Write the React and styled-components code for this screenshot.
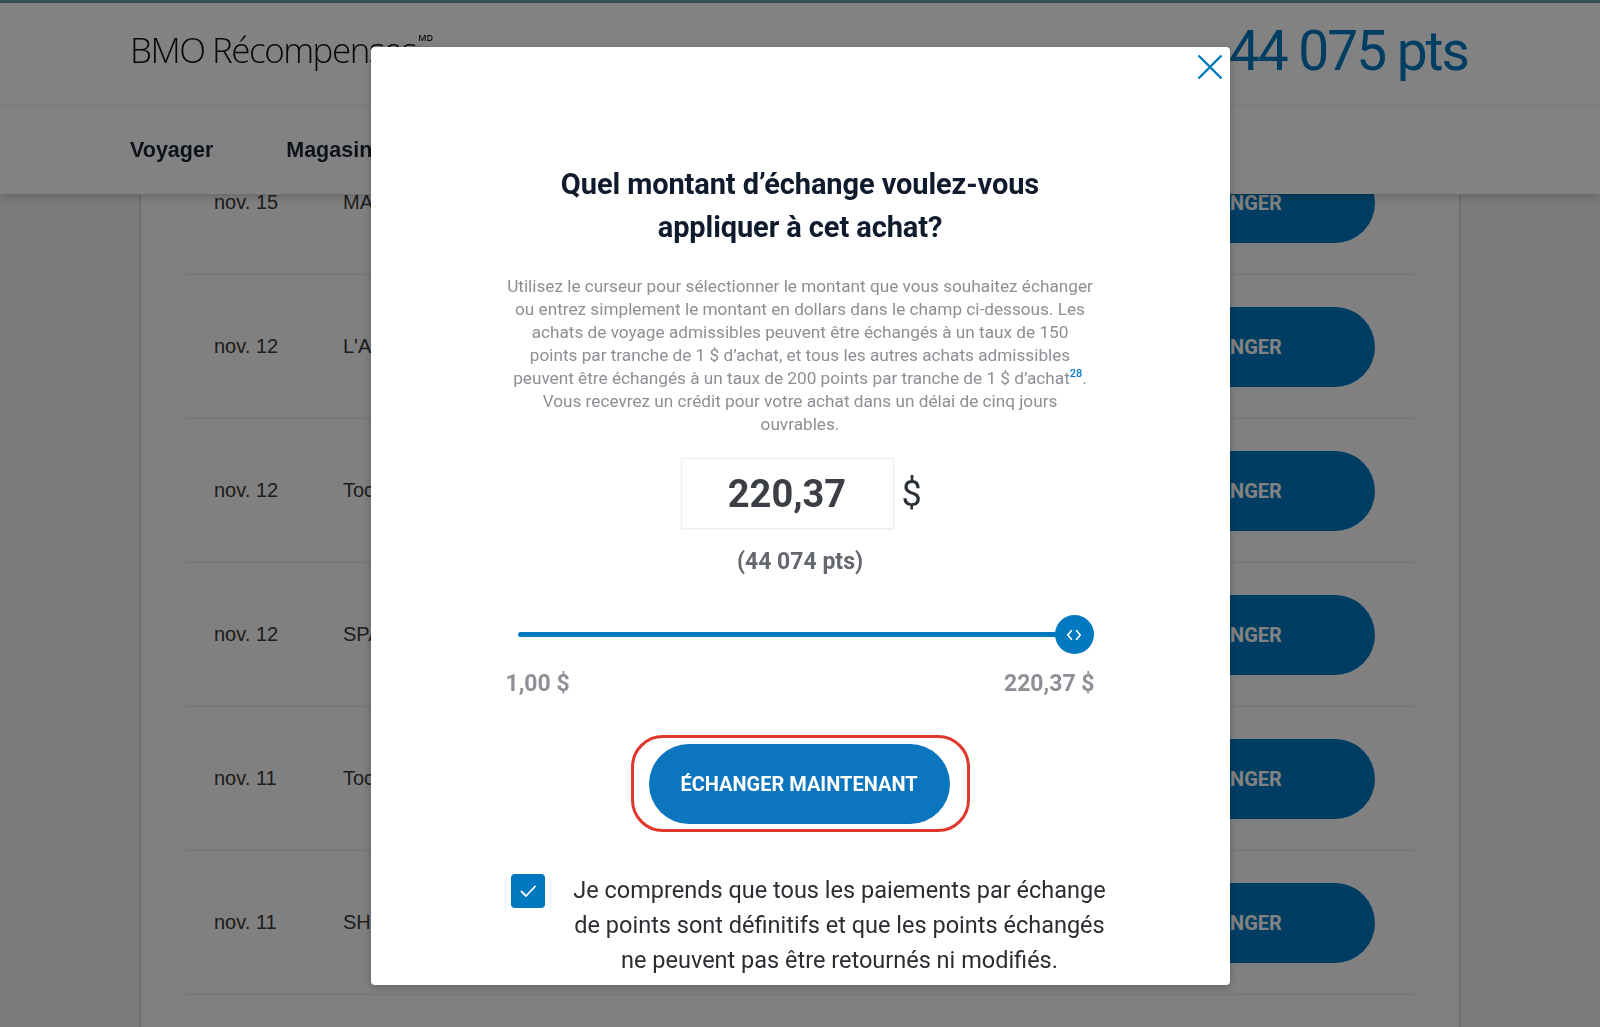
import React from "react";
import styled, { createGlobalStyle } from "styled-components";

const GlobalStyle = createGlobalStyle`
  html, body {
    margin: 0;
    padding: 0;
    overflow: hidden;
    background: #f1f1f1;
  }
  * {
    box-sizing: border-box;
  }
`;

const blue = "#0079c1";

/* ---------- page behind the dialog ---------- */

const Header = styled.header`
  position: fixed;
  top: 0;
  left: 0;
  right: 0;
  z-index: 2;
  background: #ffffff;
  border-top: 3px solid #66a19c;
  box-shadow: 0 4px 8px rgba(0, 0, 0, 0.16);
`;

const HeaderInner = styled.div`
  width: 1340px;
  margin: 0 auto;
  display: flex;
  align-items: center;
  justify-content: space-between;
  height: ${(p) => p.$height}px;
  padding-bottom: ${(p) => p.$lift || 0}px;
`;

const TopRow = styled.div`
  border-bottom: 1px solid #ececec;
`;

const Brand = styled.div`
  font-family: "Open Sans", sans-serif;
  font-weight: 300;
  font-size: 35px;
  letter-spacing: -1.5px;
  color: #111;

  sup {
    font-size: 9px;
    font-weight: 600;
    letter-spacing: 0;
    vertical-align: 22px;
    margin-left: 2px;
  }
`;

const Points = styled.div`
  font-family: Roboto, sans-serif;
  font-size: 55px;
  letter-spacing: -2px;
  color: ${blue};
  margin-right: 2px;
  margin-top: 3px;
`;

const Nav = styled.nav`
  display: flex;
  gap: 73px;
`;

const NavLink = styled.a`
  font-family: "Liberation Sans", Arial, sans-serif;
  font-weight: 700;
  font-size: 21.5px;
  color: #1a2433;
  text-decoration: none;
`;

const Page = styled.main`
  padding-top: 131px;
`;

const Card = styled.section`
  width: 1322px;
  margin: 0 auto;
  background: #fbfbfb;
  border-left: 2px solid #dadada;
  border-right: 2px solid #dadada;
  padding: 0 44px;
  min-height: 1000px;
`;

const Row = styled.div`
  height: 144px;
  display: flex;
  align-items: center;
  padding: 0 40px 0 29px;
  border-bottom: 1px solid #e6e6e6;
  font-family: "Liberation Sans", Arial, sans-serif;
  font-size: 20px;
  color: #3a3a3a;
`;

const DateCell = styled.div`
  width: 129px;
`;

const Merchant = styled.div`
  flex: 1;
`;

const RowButton = styled.button`
  width: 290px;
  height: 80px;
  border: none;
  border-radius: 40px;
  background: ${blue};
  color: #ffffff;
  font-family: Roboto, sans-serif;
  font-weight: 700;
  font-size: 20px;
`;

/* ---------- dialog ---------- */

const Overlay = styled.div`
  position: fixed;
  inset: 0;
  z-index: 5;
  background: rgba(0, 0, 0, 0.49);
  display: flex;
  justify-content: center;
  align-items: flex-start;
  padding-top: 47px;
`;

const Modal = styled.div`
  position: relative;
  width: 859px;
  height: 938px;
  overflow: hidden;
  background: #ffffff;
  border-radius: 4px;
  box-shadow: 0 2px 10px rgba(0, 0, 0, 0.25);
  display: flex;
  flex-direction: column;
  align-items: center;
  padding-top: 116px;
  font-family: Roboto, sans-serif;
`;

const CloseButton = styled.button`
  position: absolute;
  top: 5px;
  right: 5px;
  width: 30px;
  height: 30px;
  padding: 0;
  border: none;
  background: none;
  display: flex;
  align-items: center;
  justify-content: center;
`;

const Title = styled.h2`
  margin: 0;
  max-width: 600px;
  text-align: center;
  font-size: 29px;
  font-weight: 700;
  line-height: 43px;
  letter-spacing: -0.1px;
  color: #0f1b2d;
`;

const Intro = styled.p`
  margin: 26px 0 0;
  width: 640px;
  text-align: center;
  font-size: 17.2px;
  line-height: 23px;
  color: #8c8f94;

  sup {
    font-size: 11px;
    line-height: 0;
    color: ${blue};
    font-weight: 500;
  }
`;

const AmountRow = styled.div`
  margin-top: 22px;
  display: flex;
  align-items: center;
  gap: 8px;
`;

const AmountBox = styled.div`
  width: 213px;
  height: 71px;
  border: 1px solid #ececec;
  box-shadow: 0 1px 2px rgba(0, 0, 0, 0.04);
  display: flex;
  align-items: center;
  justify-content: center;
  font-size: 38px;
  font-weight: 700;
  color: #3b3e44;
`;

const Currency = styled.span`
  font-size: 36px;
  color: #2b2f36;
  width: 18px;
`;

const PointsNote = styled.div`
  margin-top: 19px;
  font-size: 23px;
  line-height: 27px;
  font-weight: 700;
  color: #64686e;
`;

const Slider = styled.div`
  position: relative;
  margin-top: 39px;
  width: 589px;
  height: 40px;
  padding: 0 20px 0 12px;
  display: flex;
  align-items: center;
`;

const Track = styled.div`
  flex: 1;
  height: 5px;
  border-radius: 3px;
  background: ${blue};
`;

const Thumb = styled.div`
  position: absolute;
  right: 1px;
  top: 1px;
  width: 39px;
  height: 39px;
  border-radius: 50%;
  background: ${blue};
  display: flex;
  align-items: center;
  justify-content: center;
`;

const RangeLabels = styled.div`
  margin-top: 16px;
  width: 589px;
  display: flex;
  justify-content: space-between;
  font-size: 23px;
  line-height: 27px;
  font-weight: 700;
  color: #8d9096;
`;

const Highlight = styled.div`
  margin-top: 38px;
  padding: 6px 17px 5px 15px;
  border: 3px solid #e0372c;
  border-radius: 32px;
`;

const PrimaryButton = styled.button`
  width: 301px;
  height: 80px;
  border: none;
  border-radius: 40px;
  background: #0b75be;
  color: #ffffff;
  font-family: Roboto, sans-serif;
  font-size: 20px;
  font-weight: 700;
  display: block;
`;

const Consent = styled.label`
  margin-top: 41px;
  display: flex;
  align-items: flex-start;
  gap: 21px;
  padding-left: 24px;
`;

const CheckBox = styled.span`
  flex: none;
  width: 34px;
  height: 34px;
  margin-top: 1px;
  border-radius: 4px;
  background: ${blue};
  display: flex;
  align-items: center;
  justify-content: center;
`;

const ConsentText = styled.span`
  width: 548px;
  text-align: center;
  font-size: 23.5px;
  line-height: 35px;
  color: #2a2d32;
`;

const rows = [
  { date: "nov. 15", merchant: "MAXI #8851 MONTREAL" },
  { date: "nov. 12", merchant: "L'ARCHEVÊQUE ST-LAURENT" },
  { date: "nov. 12", merchant: "Tocade Café" },
  { date: "nov. 12", merchant: "SPA NORDIQUE" },
  { date: "nov. 11", merchant: "Tocade Café" },
  { date: "nov. 11", merchant: "SHELL C01234" },
];

export default function App() {
  return (
    <>
      <GlobalStyle />
      <Header>
        <TopRow>
          <HeaderInner $height={102} $lift={9}>
            <Brand>
              BMO Récompenses<sup>MD</sup>
            </Brand>
            <Points>44 075 pts</Points>
          </HeaderInner>
        </TopRow>
        <HeaderInner $height={88}>
          <Nav>
            <NavLink>Voyager</NavLink>
            <NavLink>Magasiner</NavLink>
            <NavLink>Cartes-cadeaux</NavLink>
          </Nav>
        </HeaderInner>
      </Header>

      <Page>
        <Card>
          {rows.map((r, i) => (
            <Row key={i}>
              <DateCell>{r.date}</DateCell>
              <Merchant>{r.merchant}</Merchant>
              <RowButton>ÉCHANGER</RowButton>
            </Row>
          ))}
        </Card>
      </Page>

      <Overlay>
        <Modal role="dialog">
          <CloseButton aria-label="Fermer">
            <svg width="26" height="26" viewBox="0 0 26 26">
              <path d="M1.5 1.5 L24.5 24.5 M24.5 1.5 L1.5 24.5" stroke={blue} strokeWidth="2.4" />
            </svg>
          </CloseButton>

          <Title>
            Quel montant d’échange voulez-vous
            <br />
            appliquer à cet achat?
          </Title>

          <Intro>
            Utilisez le curseur pour sélectionner le montant que vous souhaitez échanger
            <br />
            ou entrez simplement le montant en dollars dans le champ ci-dessous. Les
            <br />
            achats de voyage admissibles peuvent être échangés à un taux de 150
            <br />
            points par tranche de 1 $ d’achat, et tous les autres achats admissibles
            <br />
            peuvent être échangés à un taux de 200 points par tranche de 1 $ d’achat<sup>28</sup>.
            <br />
            Vous recevrez un crédit pour votre achat dans un délai de cinq jours
            <br />
            ouvrables.
          </Intro>

          <AmountRow>
            <AmountBox>220,37</AmountBox>
            <Currency>$</Currency>
          </AmountRow>

          <PointsNote>(44 074 pts)</PointsNote>

          <Slider>
            <Track />
            <Thumb>
              <svg width="16" height="12" viewBox="0 0 16 12">
                <path d="M5.5 1.5 L1.8 6 L5.5 10.5 M10.5 1.5 L14.2 6 L10.5 10.5" fill="none" stroke="#fff" strokeWidth="1.6" strokeLinecap="round" strokeLinejoin="round" />
              </svg>
            </Thumb>
          </Slider>

          <RangeLabels>
            <span>1,00 $</span>
            <span>220,37 $</span>
          </RangeLabels>

          <Highlight>
            <PrimaryButton>ÉCHANGER MAINTENANT</PrimaryButton>
          </Highlight>

          <Consent>
            <CheckBox>
              <svg width="22" height="22" viewBox="0 0 22 22">
                <path d="M4.5 11.5 L9 16 L18 6.5" fill="none" stroke="#fff" strokeWidth="1.8" strokeLinecap="round" strokeLinejoin="round" />
              </svg>
            </CheckBox>
            <ConsentText>
              Je comprends que tous les paiements par échange de points sont définitifs et que les points échangés ne
              peuvent pas être retournés ni modifiés.
            </ConsentText>
          </Consent>
        </Modal>
      </Overlay>
    </>
  );
}
